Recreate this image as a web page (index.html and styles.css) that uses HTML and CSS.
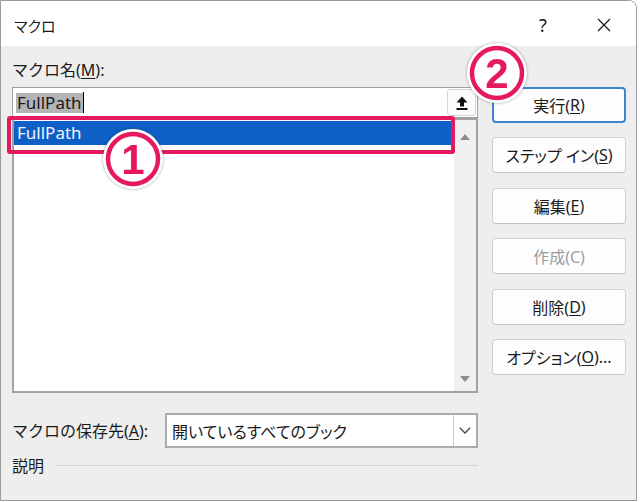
FILE: index.html
```html
<!DOCTYPE html>
<html lang="ja">
<head>
<meta charset="utf-8">
<title>マクロ</title>
<link rel="stylesheet" href="styles.css">
</head>
<body>
<div class="window">
  <div class="titlebar">
    <span class="title">マクロ</span>
    <div class="tb-controls">
      <span class="help">?</span>
      <span class="close"><svg width="14" height="14" viewBox="0 0 14 14"><path d="M1 1 L13 13 M13 1 L1 13" stroke="#1c1c1c" stroke-width="1.3" fill="none"/></svg></span>
    </div>
  </div>
  <div class="content">
    <div class="left">
      <div class="label">マクロ名(<u>M</u>):</div>
      <div class="namebox">
        <div class="edit">
          <span class="edit-text"><span class="sel">FullPath</span><span class="caret"></span></span>
          <span class="collapse"><svg width="12" height="14" viewBox="0 0 12 14"><path d="M6 0.5 L11.5 6.5 H8 V10.5 H4 V6.5 H0.5 Z" fill="#111"/><rect x="0.5" y="12" width="11" height="2" fill="#111"/></svg></span>
        </div>
        <div class="list">
          <div class="items">
            <div class="item selected">FullPath</div>
          </div>
          <div class="scrollbar">
            <span class="tri up"></span>
            <span class="tri down"></span>
          </div>
        </div>
      </div>
      <div class="save-row">
        <span class="label save-label">マクロの保存先(<u>A</u>):</span>
        <div class="combo">
          <span class="combo-text">開いているすべてのブック</span>
          <span class="combo-btn"><svg width="12" height="7" viewBox="0 0 12 7"><path d="M0.8 0.8 L6 6 L11.2 0.8" stroke="#444" stroke-width="1.3" fill="none"/></svg></span>
        </div>
      </div>
      <div class="desc-row">
        <span class="desc-label">説明</span>
        <span class="rule"></span>
      </div>
    </div>
    <div class="buttons">
      <div class="btn default">実行(<u>R</u>)</div>
      <div class="btn">ステップ イン(<u>S</u>)</div>
      <div class="btn">編集(<u>E</u>)</div>
      <div class="btn disabled">作成(C)</div>
      <div class="btn">削除(<u>D</u>)</div>
      <div class="btn">オプション(<u>O</u>)...</div>
    </div>
  </div>

  <div class="mark-rect"></div>
  <svg class="badge badge-1" width="70" height="70" viewBox="0 0 70 70">
    <circle cx="35" cy="35" r="30" fill="#fff"/>
    <circle cx="35" cy="35" r="25" fill="#fff" stroke="#e6195f" stroke-width="4.5"/>
    <text x="35" y="50" text-anchor="middle" class="badge-num">1</text>
  </svg>
  <svg class="badge badge-2" width="70" height="70" viewBox="0 0 70 70">
    <circle cx="35" cy="35" r="30" fill="#fff"/>
    <circle cx="35" cy="35" r="25" fill="#fff" stroke="#e6195f" stroke-width="4.5"/>
    <text x="35" y="50" text-anchor="middle" class="badge-num">2</text>
  </svg>
</div>
</body>
</html>
```

FILE: styles.css
```css
* { box-sizing: border-box; }

html, body {
  margin: 0;
  padding: 0;
  background: #ffffff;
}

body {
  font-family: "Noto Sans", "Noto Sans CJK JP", sans-serif;
  color: #1a1a1a;
  font-size: 16px;
}

.window {
  position: relative;
  width: 637px;
  height: 501px;
  border: 1px solid #9a9a9a;
  border-top-right-radius: 8px;
  background: #eeeeee;
  overflow: hidden;
}

.titlebar {
  height: 45px;
  background: #ffffff;
  display: flex;
  align-items: center;
  padding: 3px 0 0 13px;
}

.title {
  font-size: 15px;
  font-feature-settings: "palt";
  flex: 1;
}

.tb-controls {
  display: flex;
  align-items: center;
}

.help {
  font-size: 18px;
  width: 20px;
  text-align: center;
  margin-right: 44px;
}

.close {
  display: flex;
  width: 14px;
  height: 14px;
  margin-right: 25px;
}

.content {
  display: flex;
  gap: 14px;
  padding: 12px 0 0 11px;
}

.left {
  width: 466px;
  display: flex;
  flex-direction: column;
}

.label {
  height: 24px;
  line-height: 24px;
  margin-bottom: 5px;
  white-space: nowrap;
}

u {
  text-decoration: underline;
  text-underline-offset: 2px;
  text-decoration-thickness: 1px;
}

.namebox {
  display: flex;
  flex-direction: column;
}

.edit {
  height: 30px;
  background: #ffffff;
  border: 1px solid #a0a0a0;
  border-bottom: 0;
  display: flex;
  align-items: center;
  padding-left: 3px;
  padding-right: 1px;
}

.edit-text {
  flex: 1;
  display: flex;
  align-items: center;
  font-size: 17px;
}

.sel {
  display: inline-block;
  background: #b4b4b4;
  line-height: 20px;
  height: 20px;
  padding: 0 1px;
}

.caret {
  display: inline-block;
  width: 1px;
  height: 21px;
  background: #000;
}

.collapse {
  width: 29px;
  height: 27px;
  background: #fcfcfc;
  border: 1px solid #d6d6d6;
  border-radius: 3px;
  display: flex;
  align-items: center;
  justify-content: center;
}

.list {
  height: 276px;
  background: #ffffff;
  border: 2px solid #a3a3a3;
  border-top-width: 3px;
  display: flex;
}

.items {
  flex: 1;
  padding-top: 1px;
  padding-right: 1px;
}

.item {
  height: 24px;
  line-height: 24px;
  font-size: 17px;
  padding-left: 3px;
}

.item.selected {
  background: #0e5fc6;
  color: #eef4ff;
}

.scrollbar {
  width: 22px;
  background: #f0f0f0;
  display: flex;
  flex-direction: column;
  align-items: center;
  justify-content: space-between;
  padding: 14px 0 9px;
}

.tri {
  width: 0;
  height: 0;
  border-left: 5px solid transparent;
  border-right: 5px solid transparent;
}

.tri.up { border-bottom: 6px solid #8c8c8c; }
.tri.down { border-top: 6px solid #8c8c8c; }

.save-row {
  margin-top: 20px;
  height: 35px;
  display: flex;
  align-items: center;
}

.save-label {
  flex: 1;
  margin-bottom: 0;
}

.combo {
  width: 313px;
  height: 35px;
  background: #ffffff;
  border: 2px solid #ababab;
  display: flex;
  align-items: stretch;
}

.combo-text {
  flex: 1;
  padding-left: 5px;
  display: flex;
  align-items: center;
  font-feature-settings: "palt";
}

.combo-btn {
  width: 23px;
  border-left: 1px solid #cfcfcf;
  display: flex;
  align-items: center;
  justify-content: center;
}

.desc-row {
  margin-top: 5px;
  height: 24px;
  display: flex;
  align-items: center;
}

.rule {
  flex: 1;
  height: 1px;
  background: #d2d2d2;
  margin-left: 11px;
}

.buttons {
  width: 134px;
  margin-top: 29px;
  display: flex;
  flex-direction: column;
  gap: 14.4px;
}

.btn {
  height: 36px;
  background: #fdfdfd;
  border: 1px solid #d0d0d0;
  border-bottom-color: #c2c2c2;
  border-radius: 4px;
  display: flex;
  align-items: center;
  justify-content: center;
  font-size: 16px;
  font-feature-settings: "palt";
  white-space: nowrap;
}

.btn.default {
  border: 2px solid #3f84d0;
}

.btn.disabled {
  color: #9d9d9d;
}

.mark-rect {
  position: absolute;
  left: 6px;
  top: 114.5px;
  width: 448px;
  height: 38px;
  border: 4px solid #e6195f;
  border-radius: 3px;
}

.badge {
  position: absolute;
  filter: drop-shadow(0 0 1.5px rgba(0, 0, 0, 0.35));
}

.badge-1 { left: 97px; top: 123px; }
.badge-2 { left: 461px; top: 37px; }

.badge-num {
  font-family: "Liberation Sans", "DejaVu Sans", sans-serif;
  font-weight: 700;
  font-size: 42px;
  fill: #e6195f;
}
```
